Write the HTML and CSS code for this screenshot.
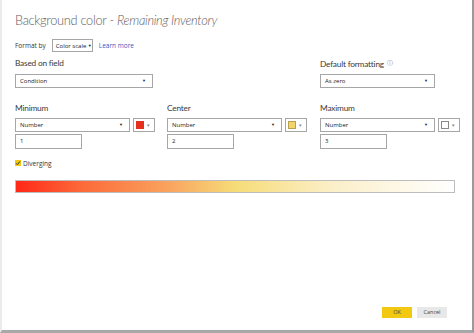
FILE: index.html
```html
<!DOCTYPE html>
<html>
<head>
<meta charset="utf-8">
<link rel="stylesheet" href="styles.css">
</head>
<body>
<div class="dialog">
  <div class="title">Background color - <em>Remaining Inventory</em></div>
  <div class="format-row">
    <span class="small-label">Format by</span>
    <div class="mini-select">Color scale <span class="caret">▼</span></div>
    <span class="link">Learn more</span>
  </div>
  <div class="grid top-grid">
    <div class="cell span2">
      <div class="label">Based on field</div>
      <div class="select wide">Condition <span class="caret">▼</span></div>
    </div>
    <div class="cell">
      <div class="label">Default formatting <span class="info">ⓘ</span></div>
      <div class="select">As zero <span class="caret">▼</span></div>
    </div>
  </div>
  <div class="grid stops">
    <div class="cell">
      <div class="label">Minimum</div>
      <div class="pick-row">
        <div class="select">Number <span class="caret">▼</span></div>
        <div class="swatch"><span class="chip red"></span><span class="sw-caret">▾</span></div>
      </div>
      <div class="input">1</div>
    </div>
    <div class="cell">
      <div class="label">Center</div>
      <div class="pick-row">
        <div class="select">Number <span class="caret">▼</span></div>
        <div class="swatch"><span class="chip yellow"></span><span class="sw-caret">▾</span></div>
      </div>
      <div class="input">2</div>
    </div>
    <div class="cell">
      <div class="label">Maximum</div>
      <div class="pick-row">
        <div class="select">Number <span class="caret">▼</span></div>
        <div class="swatch"><span class="chip white"></span><span class="sw-caret">▾</span></div>
      </div>
      <div class="input">3</div>
    </div>
  </div>
  <div class="check-row">
    <span class="checkbox"><svg width="6" height="6" viewBox="0 0 6 6"><path d="M1 3.2 L2.4 4.6 L5 1.4" fill="none" stroke="#333" stroke-width="1"/></svg></span>
    <span class="small-label">Diverging</span>
  </div>
  <div class="gradient"></div>
  <div class="buttons">
    <div class="btn ok">OK</div>
    <div class="btn cancel">Cancel</div>
  </div>
</div>
</body>
</html>
```

FILE: styles.css
```css
html, body {
  margin: 0;
  padding: 0;
  background: #fff;
}
body {
  width: 474px;
  height: 333px;
  overflow: hidden;
  font-family: "Lato", "Open Sans", sans-serif;
  color: #333;
}
.dialog {
  box-sizing: border-box;
  width: 474px;
  height: 333px;
  border-left: 2px solid #ebebeb;
  border-right: 2px solid #9a9a9a;
  border-bottom: 3px solid #a8a8a8;
  padding: 0 13px 12px 13px;
  display: flex;
  flex-direction: column;
}
.title {
  margin-top: 10px;
  height: 20px;
  line-height: 20px;
  font-size: 12.8px;
  font-weight: 300;
  letter-spacing: -0.3px;
  color: #5e5e5e;
  white-space: nowrap;
}
.title em {
  font-style: italic;
}
.format-row {
  margin-top: 9px;
  height: 13px;
  display: flex;
  align-items: center;
}
.small-label {
  font-family: "Open Sans", sans-serif;
  font-size: 6.5px;
  color: #333;
}
.mini-select {
  box-sizing: border-box;
  margin-left: 6px;
  width: 41px;
  height: 13px;
  border: 1px solid #a6a6a6;
  font-family: "Open Sans", sans-serif;
  font-size: 6px;
  line-height: 11px;
  padding-left: 3px;
  white-space: nowrap;
  color: #222;
}
.mini-select .caret {
  font-size: 4px;
  vertical-align: 1px;
}
.link {
  margin-left: 6px;
  font-family: "Open Sans", sans-serif;
  font-size: 6.5px;
  color: #3b5bc4;
}
.grid {
  display: grid;
  grid-template-columns: 152px 153px 140px;
}
.span2 {
  grid-column: span 2;
}
.top-grid {
  margin-top: 5px;
}
.label {
  height: 12px;
  line-height: 12px;
  font-size: 8.3px;
  letter-spacing: -0.2px;
  color: #3a3a3a;
  white-space: nowrap;
}
.info {
  font-size: 6px;
  color: #777;
  margin-left: 1px;
  vertical-align: 2px;
}
.select {
  box-sizing: border-box;
  position: relative;
  width: 115px;
  height: 14px;
  border: 1px solid #a6a6a6;
  font-family: "Open Sans", sans-serif;
  font-size: 6px;
  line-height: 12px;
  padding-left: 4px;
  color: #222;
  background: #fff;
}
.cell > .select {
  margin-top: 5px;
}
.select.wide {
  width: 138px;
}
.select .caret {
  position: absolute;
  right: 6px;
  top: 0;
  font-size: 4px;
  color: #222;
}
.stops {
  margin-top: 14px;
}
.pick-row {
  margin-top: 4px;
  display: flex;
  gap: 3px;
}
.swatch {
  box-sizing: border-box;
  width: 22px;
  height: 14px;
  border: 1px solid #a6a6a6;
  display: flex;
  align-items: center;
  padding-left: 2px;
  gap: 3px;
}
.chip {
  box-sizing: border-box;
  width: 8px;
  height: 8px;
}
.chip.red { background: #e5301d; }
.chip.yellow { background: #f3d46a; border: 1px solid #b8a050; }
.chip.white { background: #fff; border: 1px solid #888; }
.sw-caret {
  font-size: 5px;
  color: #888;
}
.input {
  box-sizing: border-box;
  margin-top: 2px;
  width: 67px;
  height: 15px;
  border: 1px solid #a6a6a6;
  font-family: "Open Sans", sans-serif;
  font-size: 6px;
  line-height: 13px;
  padding-left: 4px;
  color: #222;
}
.check-row {
  margin-top: 9px;
  height: 10px;
  display: flex;
  align-items: center;
  gap: 2px;
}
.checkbox {
  box-sizing: border-box;
  width: 6px;
  height: 6px;
  background: #f2c811;
  display: flex;
}
.gradient {
  box-sizing: border-box;
  margin-top: 12px;
  width: 440px;
  height: 13px;
  border: 1px solid #bdbdbd;
  background: linear-gradient(to right, #ff2818 0%, #fc6a3a 15%, #f9a460 35%, #f6dc78 50%, #fbefc8 72%, #ffffff 100%);
}
.buttons {
  margin-top: auto;
  display: flex;
  justify-content: flex-end;
  gap: 5px;
  padding-right: 12px;
}
.btn {
  width: 30px;
  height: 11px;
  line-height: 11px;
  text-align: center;
  font-family: "Open Sans", sans-serif;
  font-size: 5.5px;
}
.btn.ok {
  background: #f2c811;
  color: #444;
}
.btn.cancel {
  background: #e8e8e8;
  color: #444;
}
```
